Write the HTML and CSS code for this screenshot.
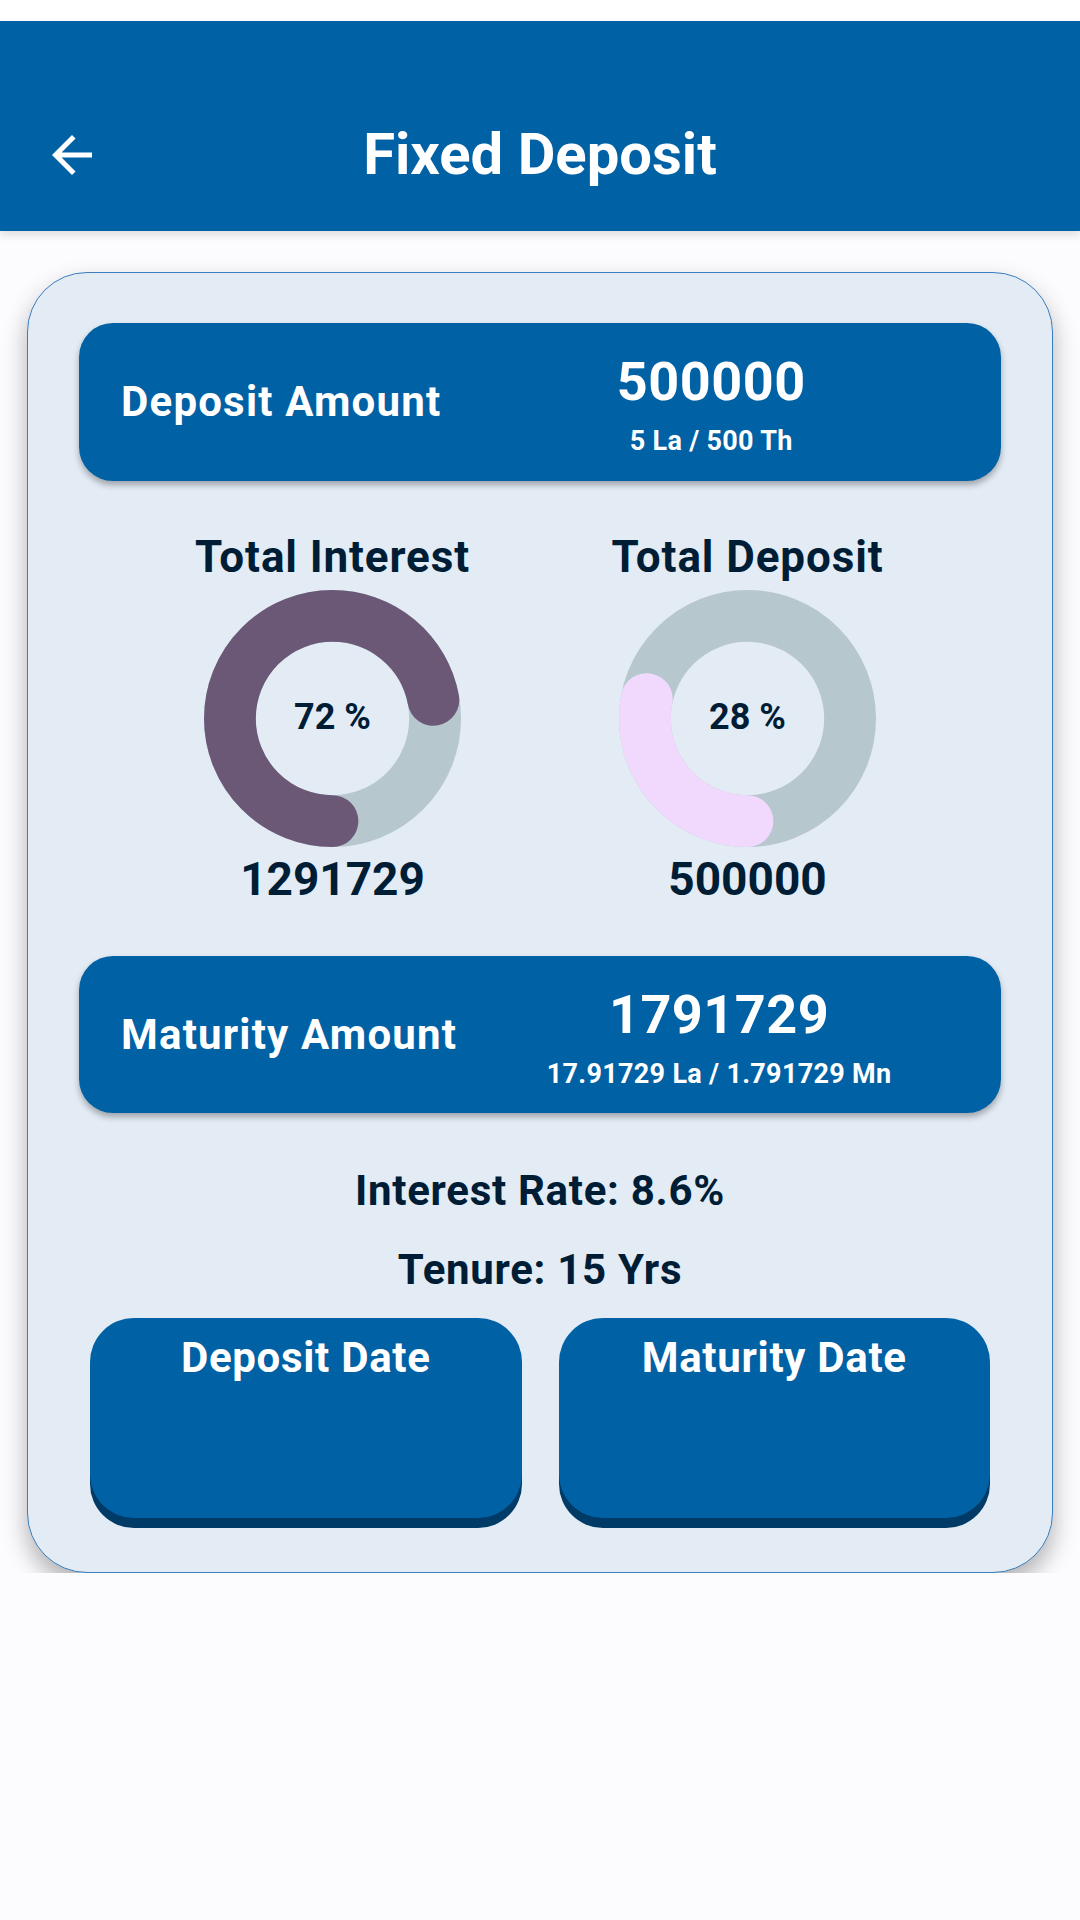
FILE: index.html
```html
<!DOCTYPE html>
<html>
<head>
    <link rel="stylesheet" href="styles.css">
    <title>Fixed Deposit</title>
</head>
<body>
    <div class="status-bar"></div>
    <div class="app-bar">
        <div class="back">
            <svg viewBox="0 0 24 24" width="60" height="60"><path d="M20 11H7.830l5.590-5.590L12 4l-8 8 8 8 1.410-1.410L7.830 13H20v-2z" fill="#ffffff"/></svg>
        </div>
        <h1 class="title">Fixed Deposit</h1>
        <div></div>
    </div>

    <div class="card">
        <div class="amount-box">
            <div class="amount-label">Deposit Amount</div>
            <div class="amount-values">
                <div class="amount-value">500000</div>
                <div class="amount-sub">5 La / 500 Th</div>
            </div>
        </div>

        <div class="charts">
            <div class="chart">
                <div class="chart-title">Total Interest</div>
                <div class="donut">
                    <svg viewBox="0 0 260 260" width="259" height="259">
                        <circle cx="130" cy="130" r="103" fill="none" stroke="#b7c7ce" stroke-width="52"/>
                        <circle cx="130" cy="130" r="103" fill="none" stroke="#6b5876" stroke-width="52" stroke-linecap="round" stroke-dasharray="465.96 647.17" transform="rotate(90 130 130)"/>
                    </svg>
                    <div class="donut-text">72 %</div>
                </div>
                <div class="chart-value">1291729</div>
            </div>
            <div class="chart">
                <div class="chart-title">Total Deposit</div>
                <div class="donut">
                    <svg viewBox="0 0 260 260" width="259" height="259">
                        <circle cx="130" cy="130" r="103" fill="none" stroke="#b7c7ce" stroke-width="52"/>
                        <circle cx="130" cy="130" r="103" fill="none" stroke="#f1d9fd" stroke-width="52" stroke-linecap="round" stroke-dasharray="181.21 647.17" transform="rotate(90 130 130)"/>
                    </svg>
                    <div class="donut-text">28 %</div>
                </div>
                <div class="chart-value">500000</div>
            </div>
        </div>

        <div class="amount-box maturity">
            <div class="amount-label">Maturity Amount</div>
            <div class="amount-values">
                <div class="amount-value">1791729</div>
                <div class="amount-sub">17.91729 La / 1.791729 Mn</div>
            </div>
        </div>

        <p class="info rate">Interest Rate: 8.6%</p>
        <p class="info tenure">Tenure: 15 Yrs</p>

        <div class="dates">
            <div class="date-box">Deposit Date</div>
            <div class="date-box">Maturity Date</div>
        </div>
    </div>
</body>
</html>
```

FILE: styles.css
```css
body {margin: 0; background-color: #fcfcff; font-family: Roboto, "Liberation Sans", sans-serif; font-weight: bold; color: #001d36;}

.status-bar {height: 21px; background-color: #ffffff;}
.app-bar {height: 152px; padding-top: 58px; background-color: #0061a4; display: grid; grid-template-columns: 1fr auto 1fr; align-items: center; box-shadow: 0 4px 8px rgba(0, 0, 0, 0.12);}
.back {display: flex; align-items: center; padding-left: 42px;}
.back svg {display: block;}
.title {margin: 0; color: #ffffff; font-size: 58px; line-height: 1.172;}

.card {margin: 41px 27px 0; padding: 50px 51px 54px; border: 1px solid #3b7ebf; border-radius: 60px; background-color: #e3ebf5; box-shadow: 0 12px 24px rgba(0, 0, 0, 0.3);}

.amount-box {height: 158px; display: flex; align-items: center; background-color: #0061a4; border-radius: 34px; color: #ffffff; box-shadow: 0 4px 6px rgba(0, 0, 0, 0.3);}
.amount-label {padding-left: 42px; font-size: 42px; letter-spacing: 1.2px; line-height: 1.172;}
.amount-values {flex: 1; padding-right: 20px; padding-top: 4px; text-align: center;}
.amount-value {font-size: 54px; letter-spacing: 0.5px; line-height: 1.172; margin-bottom: 13px;}
.amount-sub {font-size: 27px; letter-spacing: 0.3px; line-height: 1.172;}
.maturity {height: 157px; margin-top: 50px;}

.charts {display: flex; justify-content: center; gap: 115px; margin-top: 51px;}
.chart {width: 300px; display: flex; flex-direction: column; align-items: center;}
.chart-title {font-size: 44px; letter-spacing: 0.9px; line-height: 1.172; white-space: nowrap;}
.donut {display: grid; place-items: center; margin-top: 5px;}
.donut svg {grid-area: 1 / 1; display: block;}
.donut-text {grid-area: 1 / 1; font-size: 36px; line-height: 1.172; margin-top: -2px;}
.chart-value {font-size: 46px; line-height: 1.172; margin-top: 5px;}

.info {margin: 0; text-align: center; font-size: 42px; letter-spacing: 0.7px; line-height: 1.172;}
.rate {margin-top: 53px;}
.tenure {margin-top: 29px;}

.dates {display: flex; gap: 37px; padding: 0 11px; margin-top: 24px;}
.date-box {flex: 1; height: 185px; padding-top: 15px; background-color: #0061a4; border-radius: 44px; color: #ffffff; text-align: center; font-size: 42px; letter-spacing: 0.7px; line-height: 1.172; box-shadow: 0 10px 0 #003a66;}
```
